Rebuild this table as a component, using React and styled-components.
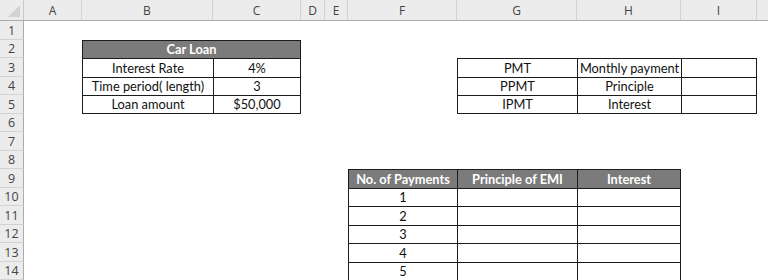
import React from 'react';
import styled, { createGlobalStyle } from 'styled-components';

const GlobalStyle = createGlobalStyle`
  html, body {
    margin: 0;
    padding: 0;
    background: #fff;
    overflow: hidden;
  }
`;

const COLS = ['A', 'B', 'C', 'D', 'E', 'F', 'G', 'H', 'I', ''];
const COL_WIDTHS = [24, 58, 131, 88, 24, 23, 109, 120, 104, 76, 80];
const ROW_HEIGHTS = [21, 19, 18, 19, 18, 19, 18, 19, 18, 19, 18, 19, 18, 19, 18];

const Sheet = styled.div`
  display: grid;
  grid-template-columns: ${COL_WIDTHS.map((w) => `${w}px`).join(' ')};
  grid-template-rows: ${ROW_HEIGHTS.map((h) => `${h}px`).join(' ')};
  width: 768px;
  height: 280px;
  overflow: hidden;
  background: #fff;
`;

const Corner = styled.div`
  position: relative;
  background: #ececec;
  border-right: 1px solid #c9c9c9;
  border-bottom: 1px solid #ababab;
  box-sizing: border-box;

  &::after {
    content: '';
    position: absolute;
    right: 3px;
    bottom: 3px;
    width: 0;
    height: 0;
    border-left: 12px solid transparent;
    border-bottom: 12px solid #d2d2d2;
  }
`;

const ColHead = styled.div`
  display: flex;
  align-items: center;
  justify-content: center;
  background: #ececec;
  border-right: 1px solid #d2d2d2;
  border-bottom: 1px solid #ababab;
  box-sizing: border-box;
  font-family: 'Open Sans', 'Noto Sans', sans-serif;
  font-size: 12px;
  color: #444;
  padding-top: 1px;
`;

const RowHead = styled.div`
  display: flex;
  align-items: center;
  justify-content: center;
  background: #ececec;
  border-right: 1px solid #ababab;
  border-bottom: 1px solid #d2d2d2;
  box-sizing: border-box;
  font-family: 'Open Sans', 'Noto Sans', sans-serif;
  font-size: 12.5px;
  color: #444;
`;

const Cell = styled.div`
  grid-column: span ${(p) => p.$span || 1};
  display: flex;
  align-items: flex-end;
  justify-content: center;
  box-sizing: border-box;
  white-space: nowrap;
  overflow: visible;
  font-family: Lato, 'Open Sans', sans-serif;
  font-size: 12.8px;
  line-height: 15px;
  font-weight: ${(p) => (p.$head ? 700 : 400)};
  color: ${(p) => (p.$head ? '#fff' : '#111')};
  background: ${(p) => (p.$head ? '#7b7b7b' : 'transparent')};
  border-left: ${(p) => (p.$left ? '1px solid #1c1c1c' : 'none')};
  border-top: ${(p) => (p.$top ? '1px solid #1c1c1c' : 'none')};
  border-right: ${(p) => (p.$right ? '1px solid #1c1c1c' : 'none')};
  border-bottom: ${(p) => (p.$bottom ? '1px solid #1c1c1c' : 'none')};
  padding-bottom: 1px;
`;

const cells = {
  B2: { text: 'Car Loan', head: true, span: 2 },
  B3: { text: 'Interest Rate' },
  C3: { text: '4%' },
  B4: { text: 'Time period( length)' },
  C4: { text: '3' },
  B5: { text: 'Loan amount' },
  C5: { text: '$50,000' },
  G3: { text: 'PMT' },
  H3: { text: 'Monthly payment' },
  G4: { text: 'PPMT' },
  H4: { text: 'Principle' },
  G5: { text: 'IPMT' },
  H5: { text: 'Interest' },
  F9: { text: 'No. of Payments', head: true },
  G9: { text: 'Principle of EMI', head: true },
  H9: { text: 'Interest', head: true },
  F10: { text: '1' },
  F11: { text: '2' },
  F12: { text: '3' },
  F13: { text: '4' },
  F14: { text: '5' },
};

// table ranges by column index (A = 0) and row number
const tables = [
  { c1: 1, c2: 2, r1: 2, r2: 5 },
  { c1: 6, c2: 8, r1: 3, r2: 5 },
  { c1: 5, c2: 7, r1: 9, r2: 99 },
];

function bordersFor(ci, endCi, r) {
  const t = tables.find((tb) => ci >= tb.c1 && ci <= tb.c2 && r >= tb.r1 && r <= tb.r2);
  if (!t) return {};
  return { $left: true, $top: true, $right: endCi === t.c2, $bottom: r === t.r2 };
}

export default function App() {
  const rows = [];
  for (let r = 1; r <= 14; r++) {
    rows.push(<RowHead key={`h${r}`}>{r}</RowHead>);
    for (let ci = 0; ci < COLS.length; ci++) {
      const data = cells[`${COLS[ci]}${r}`] || {};
      const span = data.span || 1;
      rows.push(
        <Cell
          key={`${ci}-${r}`}
          $span={span}
          $head={data.head}
          {...bordersFor(ci, ci + span - 1, r)}
        >
          {data.text}
        </Cell>
      );
      ci += span - 1;
    }
  }

  return (
    <>
      <GlobalStyle />
      <Sheet>
        <Corner />
        {COLS.map((c, i) => (
          <ColHead key={i}>{c}</ColHead>
        ))}
        {rows}
      </Sheet>
    </>
  );
}
